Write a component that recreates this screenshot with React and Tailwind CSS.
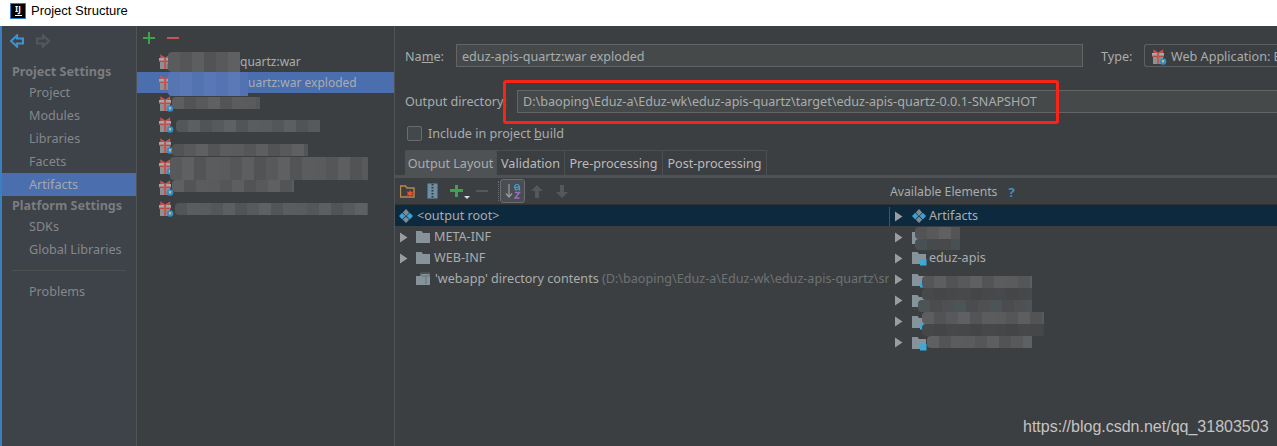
import React from 'react'

const sideFont = { fontFamily: '"Noto Sans", sans-serif' }

const GiftIcon = ({ badge = true }) => (
  <svg width="16" height="16" viewBox="0 0 16 16" className="shrink-0">
    <path d="M3 1.5 L7 4 L3 4 Z M11.5 1.5 L7.5 4 L11.5 4 Z" fill="none" stroke="#c75450" strokeWidth="1.3" />
    <rect x="1" y="4" width="12" height="3" fill="#a5a8aa" />
    <rect x="2" y="8" width="10" height="7" fill="#8e9193" />
    <rect x="6" y="4" width="2.2" height="11" fill="#c75450" />
    <rect x="1" y="6.5" width="12" height="1.3" fill="#c75450" />
    {badge && <circle cx="12" cy="12.5" r="3.3" fill="#2f8fd0" />}
    {badge && <path d="M10.7 11.2 H13.4 L12 14.2 Z" fill="#f2c94c" />}
  </svg>
)

const DiamondIcon = () => (
  <svg width="16" height="16" viewBox="0 0 16 16" className="shrink-0">
    <path d="M8 1 L11.2 4.5 L8 8 L4.8 4.5 Z" fill="#7f8b91" />
    <path d="M4.2 4.8 L7.5 8 L4.2 11.5 L1 8 Z" fill="#3d9fd3" />
    <path d="M11.8 4.8 L15 8 L11.8 11.5 L8.5 8 Z" fill="#3d9fd3" />
    <path d="M8 8.4 L11.2 11.7 L8 15 L4.8 11.7 Z" fill="#7f8b91" />
  </svg>
)

const FolderIcon = ({ module }) => (
  <svg width="16" height="16" viewBox="0 0 16 16" className="shrink-0">
    <path d="M1 2 H6.5 L8 4 H15 V14 H1 Z" fill="#87939a" />
    {module && <rect x="9" y="9" width="6.5" height="6.5" fill="#3da9d8" />}
  </svg>
)

const WebappIcon = () => (
  <svg width="16" height="16" viewBox="0 0 16 16" className="shrink-0">
    <path d="M1 5 H5 L6 3 H15 V14 H1 Z" fill="#87939a" />
    <path d="M5.5 2 H14.5 V5 H6.5 Z M11 5 V13" stroke="#5f6a70" strokeWidth="0.8" fill="none" />
  </svg>
)

const Arrow = () => (
  <svg width="9" height="11" viewBox="0 0 9 11" className="shrink-0">
    <path d="M1 0.5 L8.5 5.5 L1 10.5 Z" fill="#9a9c9e" />
  </svg>
)

const NavArrow = ({ color, flip, stroke }) => (
  <svg width="14" height="14" viewBox="0 0 14 14" className={flip ? 'rotate-180' : ''}>
    <path d="M1 7 L7 1.5 V4.5 H13 V9.5 H7 V12.5 Z" fill="none" stroke={color} strokeWidth={stroke} strokeLinejoin="miter" />
  </svg>
)

const mosaic = ['#595b5c', '#545657', '#5c5e5f', '#515354', '#58595a', '#5e6061', '#525455', '#5a5c5d']
const blueMosaic = ['#5675b3', '#5a78b5', '#5272b0', '#5877b6', '#5573b2', '#5b79b7', '#5372b1', '#5776b4']

// размытая полоса из квадратов, как мозаика на скриншоте
const Blur = ({ className, colors = mosaic, shift = 0 }) => (
  <div className={`absolute flex overflow-hidden rounded-l-[4px] ${className}`}>
    {Array.from({ length: 20 }).map((_, i) => (
      <div key={i} className="w-[12px] shrink-0 h-full" style={{ backgroundColor: colors[(i + shift) % colors.length] }} />
    ))}
  </div>
)

const artifacts = [
  { text: 'quartz:war', gap: 'ml-[66px]', badge: true },
  { text: 'uartz:war exploded', gap: 'ml-[74px]', selected: true, badge: false },
  {}, {}, {}, {}, {}, {},
]

const sideItems = ['Project', 'Modules', 'Libraries', 'Facets', 'Artifacts']

const SideItem = ({ label, active }) => (
  <div className={`h-[23px] pl-[27px] pt-[2px] flex items-center text-[12.6px] ${active ? 'bg-[#4b6eaf] text-[#a4a8ab]' : 'text-[#85888a]'}`}>
    {label}
  </div>
)

const SideHeader = ({ label }) => (
  <div className="h-[19px] pl-[10px] pt-[2px] flex items-center text-[12.6px] font-bold text-[#7a7d7f]">{label}</div>
)

const TreeRow = ({ children, selected }) => (
  <div className={`h-[21px] pt-[2px] flex items-center ${selected ? 'bg-[#0d293e]' : ''}`}>{children}</div>
)

const Tab = ({ label, active, width }) => (
  <div className={`${width} h-[25px] pt-[2px] flex items-center justify-center border-t border-r border-[#4b4f52] text-[12.6px] ${active ? 'bg-[#4e5254] text-[#a9adae]' : 'text-[#bbbbbb]'}`}>
    {label}
  </div>
)

export default function App() {
  return (
    <div className="w-[1277px] h-[446px] flex flex-col overflow-hidden bg-[#3c3f41] relative" style={sideFont}>
      {/* заголовок окна */}
      <div className="h-[26px] bg-white flex items-center shrink-0 pl-[10px] pb-[5px] gap-[5px]">
        <div className="w-[16px] h-[16px] bg-black border border-[#2f7fd0] flex flex-col items-center text-white text-[8px] font-bold leading-[10px]">
          IJ
          <div className="w-[7px] h-px bg-white mt-[1px]" />
        </div>
        <span className="text-[13px] text-black" style={{ fontFamily: '"Liberation Sans", sans-serif' }}>Project Structure</span>
      </div>

      <div className="flex flex-1 min-h-0 border-l-2 border-[#3a7fc0]">
        {/* левое меню */}
        <div className="w-[135px] shrink-0 bg-[#3e4249] border-r border-[#515456] flex flex-col">
          <div className="h-[36px] flex items-start pl-[8px] gap-[12px] pt-[8px]">
            <NavArrow color="#3f93cc" stroke={2.2} />
            <NavArrow color="#55585a" stroke={2.2} flip />
          </div>
          <SideHeader label="Project Settings" />
          {sideItems.map((s) => <SideItem key={s} label={s} active={s === 'Artifacts'} />)}
          <SideHeader label="Platform Settings" />
          <SideItem label="SDKs" />
          <SideItem label="Global Libraries" />
          <div className="mx-[10px] mt-[9px] mb-[9px] h-px bg-[#4e5052]" />
          <SideItem label="Problems" />
        </div>

        {/* список артефактов */}
        <div className="w-[258px] shrink-0 border-r border-[#515456] relative">
          <div className="h-[25px] flex items-start pt-[5px] pl-[6px] gap-[12px]">
            <span className="w-[12px] h-[12px] relative mt-[1px]">
              <span className="absolute left-[5px] top-0 w-[2px] h-[12px] bg-[#3fa14b]" />
              <span className="absolute left-0 top-[5px] w-[12px] h-[2px] bg-[#3fa14b]" />
            </span>
            <span className="w-[12px] h-[2px] bg-[#c75450] mt-[6px]" />
          </div>
          <div>
            {artifacts.map((a, i) => (
              <div key={i} className={`h-[21px] flex items-center pl-[21px] text-[12px] ${a.selected ? 'bg-[#4b6eaf]' : ''}`}>
                <GiftIcon badge={a.badge !== false} />
                {a.text && <span className={`text-[#a9adae] whitespace-nowrap ${a.gap}`}>{a.text}</span>}
              </div>
            ))}
          </div>
          {/* размытые названия */}
          <Blur className="left-[31px] top-[26px] w-[72px] h-[20px]" />
          <Blur className="left-[31px] top-[46px] w-[80px] h-[24px]" colors={blueMosaic} />
          <Blur className="left-[35px] top-[71px] w-[88px] h-[12px]" shift={2} />
          <Blur className="left-[39px] top-[94px] w-[144px] h-[12px]" shift={1} />
          <Blur className="left-[35px] top-[118px] w-[136px] h-[12px]" shift={3} />
          <Blur className="left-[33px] top-[131px] w-[198px] h-[23px]" shift={4} />
          <Blur className="left-[35px] top-[154px] w-[122px] h-[12px]" shift={5} />
          <Blur className="left-[38px] top-[177px] w-[193px] h-[12px]" shift={6} />
        </div>

        {/* настройки артефакта */}
        <div className="flex-1 min-w-0 flex flex-col">
          <div className="h-[18px] shrink-0" />
          <div className="flex items-center h-[23px] text-[12.6px] text-[#a9adae]">
            <label className="w-[61px] pl-[10px] mt-[3px]">Na<span className="underline">m</span>e:</label>
            <div className="w-[627px] h-[23px] pt-[3px] bg-[#45494a] border border-[#646464] flex items-center pl-[5px]">eduz-apis-quartz:war exploded</div>
            <span className="ml-[18px] w-[43px] mt-[3px]">Type:</span>
            <div className="flex-1 h-[23px] pt-[3px] bg-[#3c3f41] border border-r-0 border-[#5e6060] rounded-l-[3px] flex items-center pl-[6px] gap-[4px] whitespace-nowrap overflow-hidden">
              <GiftIcon />
              Web Application: E
            </div>
          </div>
          <div className="flex items-center h-[23px] mt-[23px] text-[12.6px] text-[#a9adae]">
            <label className="w-[122px] pl-[10px] mt-[2px] whitespace-nowrap">Output directory:</label>
            <div className="flex-1 h-[23px] pt-[2px] bg-[#45494a] border border-r-0 border-[#646464] flex items-center pl-[5px] whitespace-nowrap">
              D:\baoping\Eduz-a\Eduz-wk\eduz-apis-quartz\target\eduz-apis-quartz-0.0.1-SNAPSHOT
            </div>
          </div>
          <div className="flex items-center h-[15px] mt-[13px] pl-[12px] text-[12.6px] text-[#a9adae]">
            <div className="w-[15px] h-[15px] rounded-[2px] border border-[#6b6b6b] bg-[#43494a]" />
            <span className="ml-[6px] mt-[2px]">Include in project <span className="underline">b</span>uild</span>
          </div>
          <div className="flex mt-[9px] pl-[10px] h-[25px] shrink-0">
            <Tab label="Output Layout" active width="w-[92px]" />
            <Tab label="Validation" width="w-[68px]" />
            <Tab label="Pre-processing" width="w-[98px]" />
            <Tab label="Post-processing" width="w-[104px]" />
          </div>
          <div className="h-[3px] bg-[#4e5254] shrink-0" />

          {/* нижняя часть: дерево и доступные элементы */}
          <div className="flex flex-1 min-h-0">
            <div className="w-[494px] shrink-0 flex flex-col">
              <div className="h-[27px] flex items-center pl-[5px] border-b border-[#323232] shrink-0">
                <svg width="15" height="15" viewBox="0 0 15 15">
                  <path d="M0.5 2 H5.5 L7 4 H14 V13 H0.5 Z" fill="none" stroke="#b5894f" strokeWidth="1.4" />
                  <path d="M10 6 L11 8 L13.5 7.5 L12 9.5 L13.5 11.5 L11 11 L10 13.5 L9 11 L6.5 11.5 L8 9.5 L6.5 7.5 L9 8 Z" fill="#e8502f" />
                </svg>
                <svg width="11" height="16" viewBox="0 0 11 16" className="ml-[12px]">
                  <rect x="0.5" y="0.5" width="10" height="15" fill="#6e8fa3" />
                  <path d="M5.5 1 V15" stroke="#33383b" strokeWidth="2" strokeDasharray="1.5 1.5" />
                </svg>
                <span className="w-[14px] h-[14px] relative ml-[12px]">
                  <span className="absolute left-[5px] top-[1px] w-[3px] h-[12px] bg-[#3fa14b]" />
                  <span className="absolute left-0 top-[5px] w-[13px] h-[3px] bg-[#3fa14b]" />
                </span>
                <span className="w-0 h-0 border-x-[3px] border-x-transparent border-t-[3px] border-t-[#dddddd] mt-[12px]" />
                <span className="w-[12px] h-[2px] bg-[#55585a] ml-[6px]" />
                <span className="h-[20px] border-l border-dotted border-[#6b6e70] ml-[10px]" />
                <div className="w-[25px] h-[24px] ml-[1px] rounded-[3px] border border-[#6b6e70] bg-[#4a4e52] flex items-center justify-center">
                  <svg width="18" height="18" viewBox="0 0 18 18">
                    <path d="M5 2 V15 M2 11.5 L5 15 L8 11.5" fill="none" stroke="#9a9c9e" strokeWidth="1.2" />
                    <path d="M10.5 6 Q10.5 2.5 13 2.5 Q15.5 2.5 15.5 6 V8.5 M15.5 5.5 Q11 4.5 11 7 Q11 9 15.5 6.5" fill="none" stroke="#3d9fd3" strokeWidth="1.2" />
                    <path d="M11 10.5 H15.5 L11 16 H15.5" fill="none" stroke="#9a6fc0" strokeWidth="1.4" />
                  </svg>
                </div>
                <svg width="12" height="13" viewBox="0 0 12 13" className="ml-[6px]"><path d="M6 0 L12 6 H8 V13 H4 V6 H0 Z" fill="#55585a" /></svg>
                <svg width="12" height="13" viewBox="0 0 12 13" className="ml-[13px]"><path d="M6 13 L12 7 H8 V0 H4 V7 H0 Z" fill="#55585a" /></svg>
              </div>
              <TreeRow selected>
                <div className="pl-[3px] flex items-center gap-[3px] text-[12.6px] text-[#a9adae]"><DiamondIcon />&lt;output root&gt;</div>
              </TreeRow>
              <TreeRow>
                <div className="pl-[4px] flex items-center text-[12.6px] text-[#a9adae]"><Arrow /><span className="ml-[7px] mr-[3px]"><FolderIcon /></span>META-INF</div>
              </TreeRow>
              <TreeRow>
                <div className="pl-[4px] flex items-center text-[12.6px] text-[#a9adae]"><Arrow /><span className="ml-[7px] mr-[3px]"><FolderIcon /></span>WEB-INF</div>
              </TreeRow>
              <TreeRow>
                <div className="pl-[20px] flex items-center text-[12.6px] text-[#a9adae] whitespace-nowrap overflow-hidden">
                  <span className="mr-[4px]"><WebappIcon /></span>
                  'webapp' directory contents&nbsp;<span className="text-[#6f7274]">(D:\baoping\Eduz-a\Eduz-wk\eduz-apis-quartz\sr</span>
                </div>
              </TreeRow>
            </div>
            <div className="flex-1 min-w-0 flex flex-col">
              <div className="h-[27px] flex items-center border-b border-[#323232] pl-[1px] pt-[3px] text-[12.2px] text-[#a9adae] shrink-0">
                Available Elements
                <span className="ml-[11px] text-[#3f8fc0] font-bold text-[13px]">?</span>
              </div>
              <TreeRow selected>
                <div className="pl-[4px] flex items-center gap-[8px] text-[12.6px] text-[#a9adae] border-l border-[#4e5254] h-full"><Arrow /><span className="flex items-center gap-[2px]"><DiamondIcon />Artifacts</span></div>
              </TreeRow>
              {['', 'eduz-apis', '', '', '', ''].map((name, i) => (
                <TreeRow key={i}>
                  <div className="pl-[5px] flex items-center gap-[8px] text-[12.6px] text-[#a9adae]"><Arrow /><span className="flex items-center gap-[2px]"><FolderIcon module />{name}</span></div>
                </TreeRow>
              ))}
            </div>
          </div>
        </div>
      </div>

      {/* размытые модули справа */}
      <Blur className="left-[915px] top-[227px] w-[45px] h-[12px]" shift={3} />
      <Blur className="left-[915px] top-[239px] w-[45px] h-[11px]" colors={['#485054', '#464a4c', '#48494b']} />
      <Blur className="left-[922px] top-[276px] w-[110px] h-[12px]" shift={1} />
      <Blur className="left-[922px] top-[288px] w-[110px] h-[12px]" colors={['#47494b', '#444648', '#46484a']} />
      <Blur className="left-[918px] top-[300px] w-[114px] h-[12px]" colors={['#4c5458', '#4a4c4e', '#4e5052']} />
      <Blur className="left-[922px] top-[312px] w-[122px] h-[12px]" shift={2} />
      <Blur className="left-[922px] top-[324px] w-[122px] h-[12px]" colors={['#454749', '#434547', '#464849']} />
      <Blur className="left-[927px] top-[336px] w-[105px] h-[12px]" shift={5} />

      {/* красная рамка-пометка */}
      <div className="absolute left-[503px] top-[80px] w-[556px] h-[44px] border-[3px] border-[#fa2416] rounded-[3px]" />

      {/* водяной знак */}
      <div className="absolute left-[1023px] top-[417px] text-[16px] leading-[20px] text-[#c4c4c4] whitespace-nowrap" style={{ fontFamily: '"Liberation Sans", sans-serif' }}>
        https://blog.csdn.net/qq_31803503
      </div>
    </div>
  )
}
